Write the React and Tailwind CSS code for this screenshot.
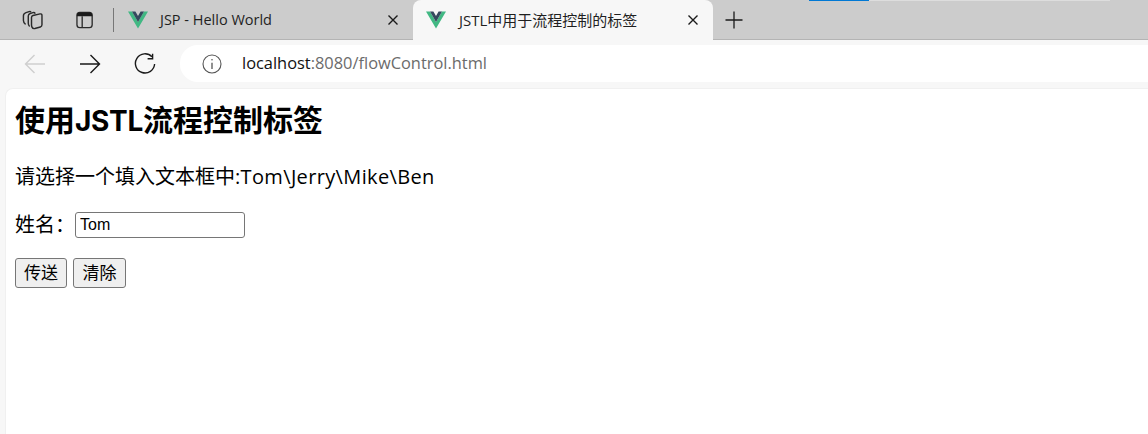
import React from "react";

const cjk = '"Open Sans", "Noto Sans CJK SC", sans-serif';

function Vue() {
  return (
    <svg width="20" height="18" viewBox="0 0 20 18" className="shrink-0">
      <path d="M0 0.5H4L10 11L16 0.5H20L10 17.5Z" fill="#41b883" />
      <path d="M4 0.5H7.4L10 5L12.6 0.5H16L10 11Z" fill="#35495e" />
    </svg>
  );
}

function Close() {
  return (
    <svg width="10" height="10" viewBox="0 0 10 10" fill="none" stroke="#1a1a1a" strokeWidth="1.4">
      <path d="M0.5 0.5L9.5 9.5M9.5 0.5L0.5 9.5" />
    </svg>
  );
}

export default function App() {
  return (
    <div className="relative h-[434px] w-[1148px] overflow-hidden bg-[#f7f7f7] text-black" style={{ fontFamily: cjk }}>
      <div className="absolute left-[809px] top-0 flex h-px w-[301px]">
        <div className="w-[60px] bg-[#0078d4]" />
        <div className="flex-1 bg-[#dddddd]" />
      </div>

      <div className="flex h-10 items-start border-b border-[#b4b4b4] bg-[#cccccc]">
        <div className="flex h-[39px] w-[114px] shrink-0 items-center">
          <svg width="22" height="20" viewBox="0 0 22 20" fill="none" stroke="#2a2a2a" strokeWidth="1.5" className="ml-[22px]">
            <path d="M11.5 5.3L19 3.6C20.2 3.4 21 4 21 5.2V15C21 16.2 20.4 17 19.3 17.3L13.5 19C12.2 19.3 11 18.6 10.5 17.5C10.1 16.6 10 15.8 10 15V7.5C10 6.4 10.5 5.6 11.5 5.3Z" />
            <path d="M14 3.4C13.4 2.4 12.6 2 11.5 2.3L8.6 3.2C7.4 3.6 6.6 4.4 6.6 5.8V13.5C6.6 14.8 7 15.9 8 16.8" />
            <path d="M9.6 1.4C9 1 8.2 1 7.4 1.2L4.2 2.2C2.8 2.7 1.5 3.6 1.5 5.4V10.6C1.5 12 2.2 13.6 3.8 14.6" />
          </svg>
          <svg width="18" height="18" viewBox="0 0 18 18" fill="none" className="ml-[33px]">
            <rect x="1" y="1" width="16" height="16" rx="3" stroke="#2a2a2a" strokeWidth="1.4" />
            <path d="M1 4C1 2 2 1 4 1H14C16 1 17 2 17 4V5H1Z" fill="#1a1a1a" />
            <path d="M6.5 5V17" stroke="#2a2a2a" strokeWidth="1.4" />
          </svg>
          <div className="ml-[20px] h-6 w-px bg-[#777777]" />
        </div>

        <div className="flex h-[39px] w-[299px] shrink-0 items-center pl-[14px] pr-[15px]">
          <Vue />
          <span className="ml-[12px] flex-1 text-[14.5px] text-[#1f1f1f]">JSP - Hello World</span>
          <Close />
        </div>

        <div className="flex h-10 w-[300px] shrink-0 items-center rounded-t-lg bg-[#f7f7f7] pl-[13px] pr-[15px]">
          <Vue />
          <span className="ml-[13px] flex-1 text-[15px] text-[#1f1f1f]">JSTL中用于流程控制的标签</span>
          <Close />
        </div>

        <div className="flex h-[39px] items-center pl-[12px]">
          <svg width="18" height="18" viewBox="0 0 18 18" stroke="#1a1a1a" strokeWidth="1.3">
            <path d="M9 0.5V17.5M0.5 9H17.5" />
          </svg>
        </div>
      </div>

      <div className="flex h-12 items-center pb-[1px]">
        <div className="flex w-[180px] shrink-0 items-center">
          <svg width="22" height="20" viewBox="0 0 22 20" fill="none" stroke="#cfcfcf" strokeWidth="1.4" className="ml-6">
            <path d="M21 10H1.5M10.5 1L1.5 10L10.5 19" />
          </svg>
          <svg width="22" height="20" viewBox="0 0 22 20" fill="none" stroke="#1a1a1a" strokeWidth="1.4" className="ml-[33px]">
            <path d="M1 10H20.5M11.5 1L20.5 10L11.5 19" />
          </svg>
          <svg width="22" height="22" viewBox="0 0 22 22" fill="none" stroke="#1a1a1a" strokeWidth="1.4" className="ml-[33px]">
            <path d="M18 3.8A9.6 9.6 0 1 0 20.6 11" />
            <path d="M18.6 0.8V5.8H13.6" />
          </svg>
        </div>
        <div className="flex h-[37px] flex-1 items-center rounded-l-[18px] bg-white pl-[22px]">
          <svg width="20" height="20" viewBox="0 0 20 20" fill="none" stroke="#555555" strokeWidth="1.1">
            <circle cx="10" cy="10" r="9" />
            <path d="M10 8.8V15" strokeWidth="1.3" />
            <circle cx="10" cy="5.8" r="0.8" fill="#555555" stroke="none" />
          </svg>
          <span className="ml-[20px] text-[16.4px]">
            <span className="text-[#111111]">localhost</span>
            <span className="text-[#6b6b6b]">:8080/flowControl.html</span>
          </span>
        </div>
      </div>

      <div className="ml-[5px] h-[346px] rounded-tl-lg border-l border-t border-[#f0f0f0] bg-white pl-[9px]">
        <h1 className="mt-[11px] h-[40px] text-[30px] font-bold leading-[40px]">
          使用<span className="text-[28px] tracking-[-0.3px]" style={{ fontFamily: 'Inter, sans-serif' }}>JSTL</span>流程控制标签
        </h1>
        <p className="mt-[24px] h-[26px] text-[20px] leading-[26px]">
          请选择一个填入文本框中<span className="tracking-[0.35px]">:Tom\Jerry\Mike\Ben</span>
        </p>
        <div className="mt-[22px] flex h-[26px] items-center">
          <span className="w-[60px] text-[20px]">姓名：</span>
          <input
            readOnly
            value="Tom"
            className="h-[26px] w-[170px] rounded-[3px] border border-[#767676] bg-white px-[4px] text-[16px] outline-none"
            style={{ fontFamily: '"Liberation Sans", sans-serif' }}
          />
        </div>
        <div className="mt-[20px] flex gap-[6px]">
          <button className="h-[30px] w-[52px] rounded-[3px] border border-[#767676] bg-[#efefef] text-[17px]">传送</button>
          <button className="h-[30px] w-[53px] rounded-[3px] border border-[#767676] bg-[#efefef] text-[17px]">清除</button>
        </div>
      </div>
    </div>
  );
}
